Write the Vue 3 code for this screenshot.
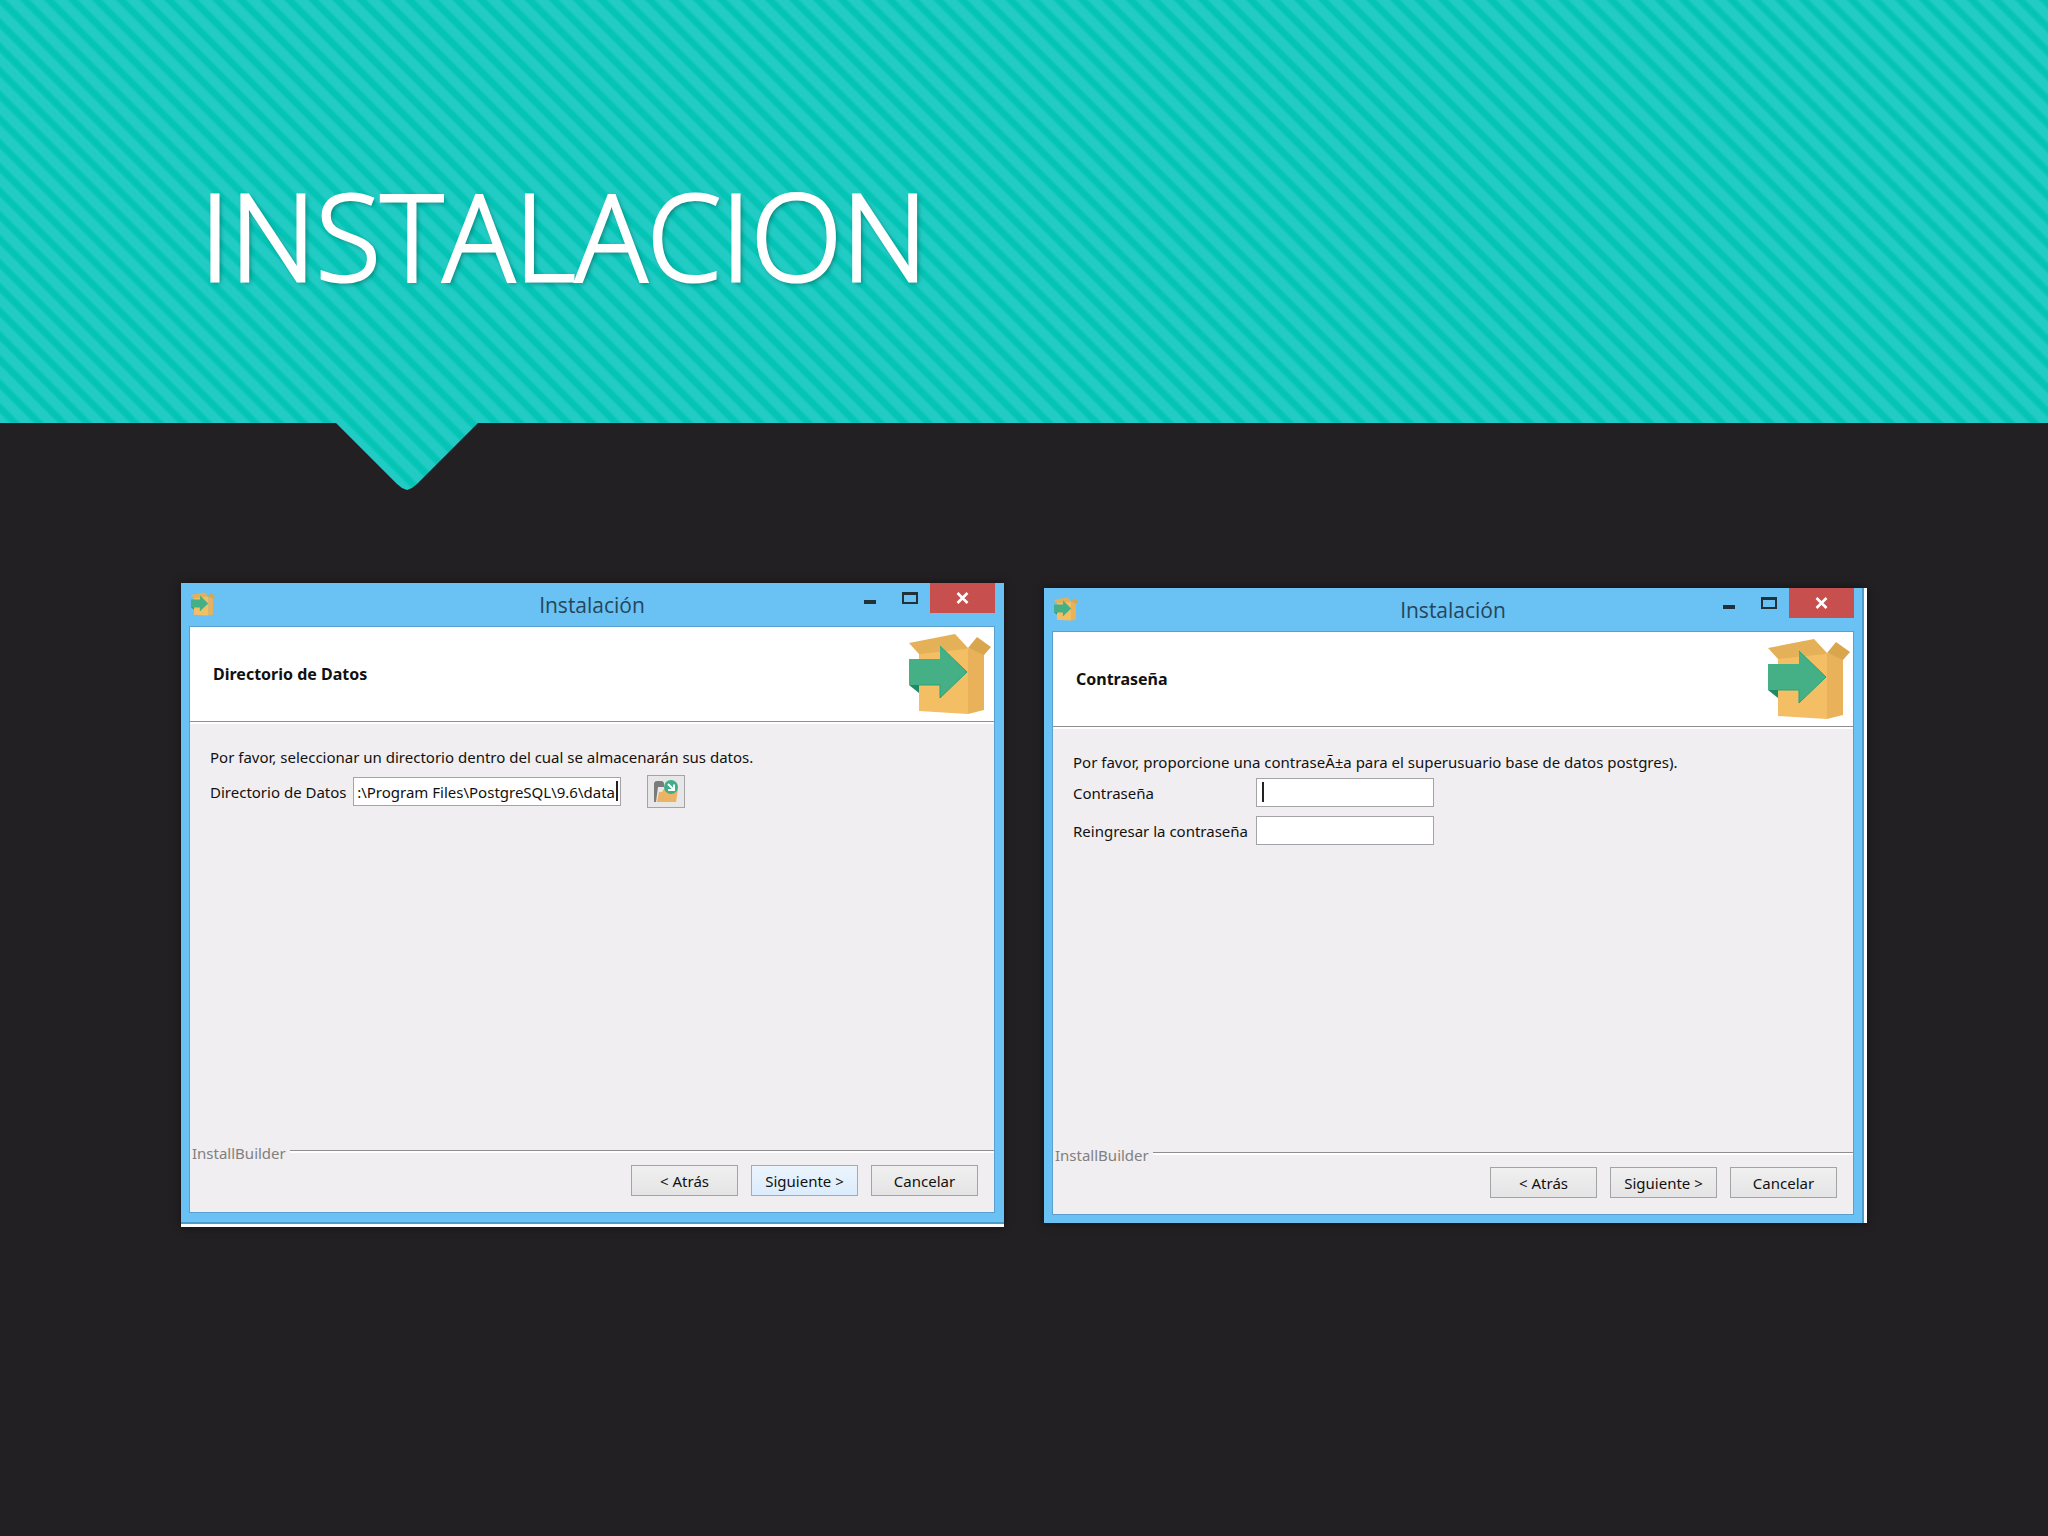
<template>
  <div class="slide">
    <header class="banner">
      <h1 class="banner-title">INSTALACION</h1>
    </header>

    <main class="windows">
      <section
        v-for="win in windows"
        :key="win.id"
        :class="['window', `window-${win.id}`]"
      >
        <div class="title-bar">
          <svg class="title-icon" viewBox="0 0 82 80" aria-hidden="true">
            <use href="#box-icon" />
          </svg>
          <h2 class="title-text">Instalación</h2>
          <div class="title-controls">
            <button type="button" class="control control-min" aria-label="Minimizar">
              <svg width="12" height="4" viewBox="0 0 12 4"><rect width="12" height="4" fill="#22303a" /></svg>
            </button>
            <button type="button" class="control" aria-label="Maximizar">
              <svg width="16" height="12" viewBox="0 0 16 12">
                <path d="M0 0h16v12H0zM2 3v7h12V3z" fill="#22303a" fill-rule="evenodd" />
              </svg>
            </button>
            <button type="button" class="control control-close" aria-label="Cerrar">
              <svg width="13" height="12" viewBox="0 0 13 12">
                <path d="M1.500 1l10 10M11.500 1l-10 10" stroke="#fff" stroke-width="2.600" />
              </svg>
            </button>
          </div>
        </div>

        <div class="client">
          <div class="client-header">
            <h3 class="client-title">{{ win.heading }}</h3>
            <svg class="client-icon" viewBox="0 0 82 80" aria-hidden="true">
              <use href="#box-icon" />
            </svg>
          </div>

          <form class="client-body" @submit.prevent>
            <p class="message">{{ win.message }}</p>

            <div v-if="win.id === 'data'" class="field">
              <label for="data-dir">Directorio de Datos</label>
              <span class="input-wrap caret-end">
                <input id="data-dir" v-model="dataDir" type="text" class="input input-dir" />
              </span>
              <button type="button" class="browse" aria-label="Examinar">
                <svg width="26" height="24" viewBox="0 0 26 24">
                  <path d="M1 22V4q0-3 3-3h4q3 0 3 3v3H5L3 22z" fill="#7b7b7b" />
                  <path d="M6 12h3l2-3h14l-2 13H4z" fill="#ebb363" />
                  <circle cx="18" cy="7" r="7" fill="#3fae88" />
                  <path d="M15 4l6 6M21 4.500V10h-6" fill="none" stroke="#fff" stroke-width="2" />
                </svg>
              </button>
            </div>

            <div v-else class="password-grid">
              <label for="password">Contraseña</label>
              <span class="input-wrap caret-start">
                <input id="password" v-model="password" type="password" class="input" />
              </span>
              <label for="password-again">Reingresar la contraseña</label>
              <span class="input-wrap">
                <input id="password-again" v-model="passwordAgain" type="password" class="input" />
              </span>
            </div>
          </form>

          <div class="brand">
            <span>InstallBuilder</span>
          </div>
          <div class="actions">
            <button type="button" class="action">&lt; Atrás</button>
            <button type="button" :class="['action', { 'action-active': win.id === 'data' }]">Siguiente &gt;</button>
            <button type="button" class="action">Cancelar</button>
          </div>
        </div>
      </section>
    </main>

    <svg class="symbols" aria-hidden="true">
      <symbol id="box-icon" viewBox="0 0 82 80">
        <path d="M10 18L59 14V80L10 77z" fill="#f4be65" />
        <path d="M59 14L75 20V76L59 80z" fill="#e9b25a" />
        <path d="M0 9L46 0L59 14L57 15L10 20z" fill="#e4b058" />
        <path d="M59 14L68 3L82 13L75 21z" fill="#d9a64d" />
        <path d="M0 51L10 59V51z" fill="#1f8a63" />
        <path d="M0 25H31V12L58 38L31 64V51H0z" fill="#45b086" />
        <path d="M10 51H31V64L58 38L31 12" fill="none" stroke="#23a57a" stroke-width="1" />
      </symbol>
    </svg>
  </div>
</template>

<script setup>
import { ref } from 'vue'

const dataDir = ref(':\\Program Files\\PostgreSQL\\9.6\\data')
const password = ref('')
const passwordAgain = ref('')

const windows = [
  {
    id: 'data',
    heading: 'Directorio de Datos',
    message: 'Por favor, seleccionar un directorio dentro del cual se almacenarán sus datos.'
  },
  {
    id: 'password',
    heading: 'Contraseña',
    message: 'Por favor, proporcione una contraseÃ±a para el superusuario base de datos postgres).'
  }
]
</script>

<style>
body {
  margin: 0;
  background: #222023;
}
</style>

<style scoped>
.slide {
  min-height: 100vh;
  background: #222023;
  font-family: "Noto Sans", sans-serif;
  font-size: 15px;
  line-height: 24px;
  color: #111;
}

.slide *,
.slide *::after {
  box-sizing: border-box;
}

.banner {
  height: 490px;
  padding: 151px 200px 0;
  background: repeating-linear-gradient(45deg, #22ccc4 0, #22ccc4 2px, #04c4b5 5px, #04c4b5 9px, #22ccc4 12px, #22ccc4 17px);
  clip-path: polygon(0 0, 100% 0, 100% 423px, 478px 423px, 417px 484px, 412px 488px, 407px 490px, 402px 488px, 397px 484px, 336px 423px, 0 423px);
}

.banner-title {
  margin: 0;
  font-family: "Open Sans", sans-serif;
  font-size: 119px;
  font-weight: 300;
  line-height: 168px;
  color: #fff;
  -webkit-text-stroke: 3px #fff;
  text-shadow: 2px 2px 5px rgba(0, 60, 60, 0.6);
}

.windows {
  display: grid;
  grid-template-columns: 1fr 1fr;
  align-items: start;
  gap: 40px;
  padding: 93px 181px 0;
}

.window {
  min-width: 0;
  background: #69c1f4;
  box-shadow: 0 0 8px rgba(0, 0, 0, 0.5);
}

.window-data {
  padding: 0 9px 11px 8px;
  border-bottom: 3px solid #fff;
  box-shadow: inset 0 -2px #4c9ccb, 0 0 8px rgba(0, 0, 0, 0.5);
}

.window-password {
  margin-top: 5px;
  padding: 0 10px 8px 8px;
  border-right: 3px solid #fff;
  box-shadow: inset -2px 0 #4c9ccb, 0 0 8px rgba(0, 0, 0, 0.5);
}

.title-bar {
  display: grid;
  grid-template-columns: 1fr auto 1fr;
  height: 43px;
}

.title-icon {
  width: 24px;
  height: 24px;
  margin: 9px 0 0 2px;
}

.title-text {
  margin: 0;
  font-family: "Open Sans", sans-serif;
  font-size: 21px;
  font-weight: 400;
  line-height: 44px;
  color: #25465a;
}

.title-controls {
  display: flex;
  justify-content: flex-end;
  align-items: flex-start;
}

.control {
  display: flex;
  align-items: center;
  justify-content: center;
  width: 40px;
  height: 30px;
  padding: 0;
  border: 0;
  background: transparent;
}

.control-min {
  padding-top: 8px;
}

.control-close {
  width: 65px;
  background: #c7504f;
}

.client {
  border: 1px solid #5a9fcd;
  background: #f0eef0;
}

.client-header {
  display: flex;
  align-items: center;
  justify-content: space-between;
  height: 95px;
  padding: 0 3px 0 23px;
  border-bottom: 1px solid #8e8e8e;
  background: #fff;
}

.client-title {
  margin: 0;
  font-size: 16px;
  font-weight: 700;
}

.client-icon {
  width: 82px;
  height: 80px;
}

.client-body {
  height: 419px;
  padding: 21px 20px 0;
  border-top: 2px solid #fff;
}

.window-password .client-body {
  height: 416px;
}

.message {
  margin: 0;
}

.field {
  display: flex;
  align-items: center;
  margin-top: 6px;
}

.input-wrap {
  position: relative;
  display: inline-flex;
}

.input {
  width: 178px;
  height: 29px;
  padding: 0 3px;
  border: 1px solid #a3a3a8;
  border-radius: 0;
  background: #fff;
  font: inherit;
  color: #111;
  outline: none;
}

.input-dir {
  width: 268px;
  padding: 0 5px 0 0;
  text-align: right;
}

.field label {
  width: 143px;
  white-space: nowrap;
}

.caret-end::after,
.caret-start::after {
  content: "";
  position: absolute;
  top: 4px;
  width: 2px;
  height: 20px;
  background: #222;
}

.caret-end::after {
  right: 3px;
}

.caret-start::after {
  left: 6px;
}

.browse {
  display: flex;
  align-items: center;
  justify-content: center;
  width: 38px;
  height: 33px;
  margin-left: 26px;
  padding: 0;
  border: 1px solid #a3a3a8;
  background: #e8e7e8;
}

.password-grid {
  display: grid;
  grid-template-columns: 183px auto;
  justify-content: start;
  align-items: center;
  row-gap: 9px;
  margin-top: 4px;
  white-space: nowrap;
}

.brand {
  display: flex;
  align-items: center;
  gap: 4px;
  height: 24px;
  padding-left: 2px;
  color: #808080;
}

.brand::after {
  content: "";
  flex: 1;
  height: 3px;
  margin-bottom: 4px;
  border-top: 1px solid #8e8e8e;
  background: #fff;
}

.actions {
  display: flex;
  justify-content: flex-end;
  gap: 13px;
  padding: 0 16px 16px;
}

.action {
  width: 107px;
  height: 31px;
  padding: 0;
  border: 1px solid #a4a4a7;
  background: linear-gradient(#f1f0f1, #e4e4e5);
  font: inherit;
  line-height: 24px;
  color: #111;
}

.action-active {
  border-color: #7eb4ea;
  background: linear-gradient(#ebf4fc, #dcecfc);
}

.symbols {
  display: none;
}
</style>
